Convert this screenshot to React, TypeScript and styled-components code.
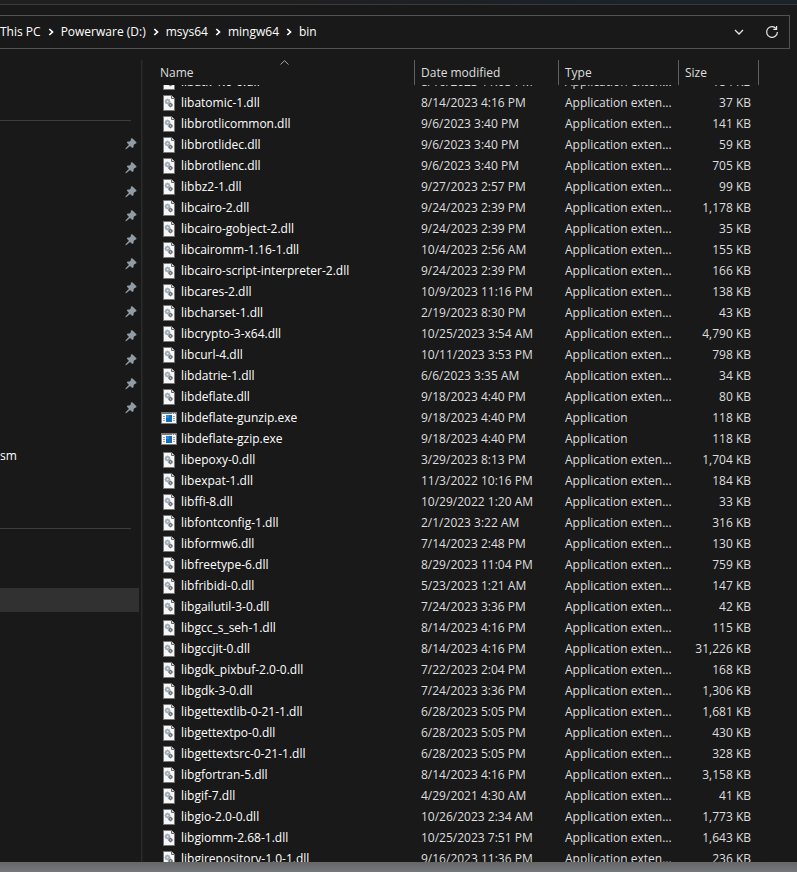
import { Fragment, useLayoutEffect, useRef } from "react";
import styled, { createGlobalStyle } from "styled-components";

const GlobalStyle = createGlobalStyle`
  *, *::before, *::after { box-sizing: border-box; }
  body {
    margin: 0;
    background: #191919;
    color: #fff;
    font-family: "Segoe UI", "Open Sans", "Noto Sans", sans-serif;
    font-size: 12px;
    line-height: 20px;
  }
`;

const Window = styled.div`
  display: flex;
  flex-direction: column;
  height: 100vh;
  overflow: hidden;
  background: #191919;
`;

const TitleEdge = styled.div`
  flex: none;
  height: 5px;
  background: linear-gradient(90deg, #1f1f1f, #1f1f20 30%, #1a222a 80%);
  border-bottom: 1px solid #3b3b3b;
`;

const Toolbar = styled.header`
  flex: none;
  display: flex;
  padding: 10px 7px 11px 0;
`;

const AddressBar = styled.nav`
  flex: 1;
  min-width: 0;
  height: 34px;
  display: flex;
  align-items: center;
  justify-content: space-between;
  border: 1px solid #535353;
  border-left: 0;
  padding-right: 7px;
`;

const Crumbs = styled.ol`
  display: flex;
  align-items: center;
  margin: 0;
  padding: 0;
  list-style: none;
  white-space: nowrap;
`;

const Crumb = styled.a`
  color: #fff;
  text-decoration: none;
`;

const CrumbArrow = styled.li`
  display: flex;
  justify-content: center;
  width: 20px;
`;

const BarActions = styled.div`
  display: flex;
  gap: 13px;
`;

const IconButton = styled.button`
  display: flex;
  align-items: center;
  justify-content: center;
  width: 20px;
  height: 20px;
  padding: 0;
  border: 0;
  background: none;
  color: #e6e6e6;
`;

const Body = styled.div`
  flex: 1;
  min-height: 0;
  display: flex;
`;

const Sidebar = styled.aside`
  flex: none;
  width: 143px;
  padding-right: 3px;
  border-right: 1px solid #212121;
  box-shadow: inset -1px 0 #2b2b2b;
`;

const SideRule = styled.hr`
  height: 1px;
  margin: 0 8px 0 0;
  border: 0;
  background: #3d3d3d;
`;

const SideGroup = styled.ul<{ $top: number; $bottom: number }>`
  margin: 0;
  padding: ${(p) => p.$top}px 0 ${(p) => p.$bottom}px;
  list-style: none;
`;

const SideItem = styled.li<{ $selected?: boolean }>`
  display: flex;
  align-items: center;
  height: 24px;
  padding-right: 2px;
  background: ${(p) => (p.$selected ? "#313131" : "transparent")};
`;

const PinSlot = styled.span`
  display: flex;
  margin-left: auto;
`;

const ListPane = styled.main`
  flex: 1;
  min-width: 0;
  overflow: hidden auto;
  scrollbar-width: none;
`;

const FileTable = styled.table`
  table-layout: fixed;
  width: 616px;
  border-collapse: separate;
  border-spacing: 0;
`;

const Column = styled.col<{ $width: number }>`
  width: ${(p) => p.$width}px;
`;

const HeadCell = styled.th`
  position: sticky;
  top: 0;
  z-index: 1;
  height: 25px;
  padding: 0 0 0 6px;
  background: #191919;
  border-right: 1px solid #5f5f5f;
  color: #dedede;
  font-weight: 400;
  line-height: 24px;
  text-align: left;

  &:first-child { padding-left: 17px; }
`;

const SortMark = styled.span`
  position: absolute;
  top: 0;
  left: 0;
  right: 0;
  display: flex;
  justify-content: center;
  padding-left: 11px;
`;

const Cell = styled.td<{ $right?: boolean }>`
  height: 21px;
  padding: 0 ${(p) => (p.$right ? 8 : 6)}px 0 6px;
  color: #dedede;
  text-align: ${(p) => (p.$right ? "right" : "left")};
  white-space: nowrap;
  overflow: hidden;
`;

const NameCell = styled.td`
  height: 21px;
  padding: 0 0 0 18px;
`;

const FileName = styled.span`
  display: flex;
  align-items: center;
  gap: 4px;
  color: #fff;
  white-space: nowrap;
`;

const DesktopEdge = styled.div`
  flex: none;
  height: 10px;
  background: linear-gradient(#666, #6b6d6f 40%, #73787d);
`;

const ArrowRight = () => (
  <svg width="6" height="8" viewBox="0 0 6 8" fill="none" stroke="#fff" strokeWidth="1.7">
    <path d="M1.3 1 4.5 4 1.3 7" />
  </svg>
);

const ChevronDown = () => (
  <svg width="10" height="6" viewBox="0 0 10 6" fill="none" stroke="currentColor" strokeWidth="1.3">
    <path d="M1 1 5 5 9 1" />
  </svg>
);

const Refresh = () => (
  <svg width="14" height="14" viewBox="0 0 14 14" fill="none" stroke="currentColor" strokeWidth="1.2">
    <path d="M11.2 3.6A5.400 5.400 0 1 0 12.400 7" />
    <path d="M11.600 1V4.300H8.300" />
  </svg>
);

const SortUp = () => (
  <svg width="9" height="5" viewBox="0 0 9 5" fill="none" stroke="#a8a8a8" strokeWidth="1">
    <path d="M.5 4.5 4.5.7 8.5 4.5" />
  </svg>
);

const Pin = () => (
  <svg width="12" height="12" viewBox="0 0 12 12" fill="#929ba3">
    <path d="M5.900.6 7.200.2 11.500 4.300 11.200 5.600 9.500 5.900 8.700 7.300 8.400 9.300 7.300 9.900 5 7.900 1.500 11 .4 11.200.6 10.200 3.900 6.800 1.900 4.700 2.500 3.500 4.600 3.400 5.900 2.300Z" />
  </svg>
);

const DllIcon = () => (
  <svg width="16" height="16" viewBox="0 0 16 16" fill="none">
    <path d="M2.500.5H10.500L13.500 3.500V15.500H2.500Z" fill="#f7f7f7" stroke="#777" />
    <path d="M10.500.5V3.500H13.500" fill="#ddd" stroke="#666" />
    <path d="M6.500 3.500V9.500M3.500 6.500H9.500M4.500 4.500l4 4M8.500 4.500l-4 4" stroke="#b3bcc5" />
    <circle cx="6.500" cy="6.500" r="1.800" fill="#dfe5ea" stroke="#9aa6b1" strokeWidth="1.400" />
    <path d="M9.500 7.500V12.500M7 10H12" stroke="#8b9299" />
    <circle cx="9.500" cy="10" r="1.400" fill="#d5dadf" stroke="#666e76" strokeWidth="1.300" />
  </svg>
);

const ExeIcon = () => (
  <svg width="16" height="16" viewBox="0 0 16 16" shapeRendering="crispEdges">
    <path fill="#7a7a7a" d="M0 2h16v12H0z" />
    <path fill="#f7f7f7" d="M1 4h14v9H1z" />
    <path fill="#ddd" d="M11 3h1v1h-1zM13 3h1v1h-1z" />
    <path fill="#0f6fc0" d="M5 5h6v7H5z" />
    <path fill="#2a8bdc" d="M5 5h3v3H5z" />
    <path fill="#999" d="M2 6h2v1H2zM2 8h2v1H2zM2 10h2v1H2zM12 6h2v1h-2zM12 8h2v1h-2zM12 10h2v1h-2z" />
  </svg>
);

const crumbs = ["This PC", "Powerware (D:)", "msys64", "mingw64", "bin"];

const columns = [
  { label: "Name", width: 272 },
  { label: "Date modified", width: 144 },
  { label: "Type", width: 120 },
  { label: "Size", width: 80 },
];

const files: [string, string, string][] = [
  ["libatk-1.0-0.dll", "8/16/2023 11:03 PM", "184 KB"],
  ["libatomic-1.dll", "8/14/2023 4:16 PM", "37 KB"],
  ["libbrotlicommon.dll", "9/6/2023 3:40 PM", "141 KB"],
  ["libbrotlidec.dll", "9/6/2023 3:40 PM", "59 KB"],
  ["libbrotlienc.dll", "9/6/2023 3:40 PM", "705 KB"],
  ["libbz2-1.dll", "9/27/2023 2:57 PM", "99 KB"],
  ["libcairo-2.dll", "9/24/2023 2:39 PM", "1,178 KB"],
  ["libcairo-gobject-2.dll", "9/24/2023 2:39 PM", "35 KB"],
  ["libcairomm-1.16-1.dll", "10/4/2023 2:56 AM", "155 KB"],
  ["libcairo-script-interpreter-2.dll", "9/24/2023 2:39 PM", "166 KB"],
  ["libcares-2.dll", "10/9/2023 11:16 PM", "138 KB"],
  ["libcharset-1.dll", "2/19/2023 8:30 PM", "43 KB"],
  ["libcrypto-3-x64.dll", "10/25/2023 3:54 AM", "4,790 KB"],
  ["libcurl-4.dll", "10/11/2023 3:53 PM", "798 KB"],
  ["libdatrie-1.dll", "6/6/2023 3:35 AM", "34 KB"],
  ["libdeflate.dll", "9/18/2023 4:40 PM", "80 KB"],
  ["libdeflate-gunzip.exe", "9/18/2023 4:40 PM", "118 KB"],
  ["libdeflate-gzip.exe", "9/18/2023 4:40 PM", "118 KB"],
  ["libepoxy-0.dll", "3/29/2023 8:13 PM", "1,704 KB"],
  ["libexpat-1.dll", "11/3/2022 10:16 PM", "184 KB"],
  ["libffi-8.dll", "10/29/2022 1:20 AM", "33 KB"],
  ["libfontconfig-1.dll", "2/1/2023 3:22 AM", "316 KB"],
  ["libformw6.dll", "7/14/2023 2:48 PM", "130 KB"],
  ["libfreetype-6.dll", "8/29/2023 11:04 PM", "759 KB"],
  ["libfribidi-0.dll", "5/23/2023 1:21 AM", "147 KB"],
  ["libgailutil-3-0.dll", "7/24/2023 3:36 PM", "42 KB"],
  ["libgcc_s_seh-1.dll", "8/14/2023 4:16 PM", "115 KB"],
  ["libgccjit-0.dll", "8/14/2023 4:16 PM", "31,226 KB"],
  ["libgdk_pixbuf-2.0-0.dll", "7/22/2023 2:04 PM", "168 KB"],
  ["libgdk-3-0.dll", "7/24/2023 3:36 PM", "1,306 KB"],
  ["libgettextlib-0-21-1.dll", "6/28/2023 5:05 PM", "1,681 KB"],
  ["libgettextpo-0.dll", "6/28/2023 5:05 PM", "430 KB"],
  ["libgettextsrc-0-21-1.dll", "6/28/2023 5:05 PM", "328 KB"],
  ["libgfortran-5.dll", "8/14/2023 4:16 PM", "3,158 KB"],
  ["libgif-7.dll", "4/29/2021 4:30 AM", "41 KB"],
  ["libgio-2.0-0.dll", "10/26/2023 2:34 AM", "1,773 KB"],
  ["libgiomm-2.68-1.dll", "10/25/2023 7:51 PM", "1,643 KB"],
  ["libgirepository-1.0-1.dll", "9/16/2023 11:36 PM", "236 KB"],
];

const pins = Array.from({ length: 12 }, (_, i) => i);

export default function App() {
  const pane = useRef<HTMLElement>(null);

  useLayoutEffect(() => {
    if (pane.current) pane.current.scrollTop = 14;
  }, []);

  return (
    <Window>
      <GlobalStyle />
      <TitleEdge />
      <Toolbar>
        <AddressBar aria-label="Address">
          <Crumbs>
            {crumbs.map((name, i) => (
              <Fragment key={name}>
                {i > 0 && (
                  <CrumbArrow aria-hidden="true">
                    <ArrowRight />
                  </CrumbArrow>
                )}
                <li>
                  <Crumb href="#">{name}</Crumb>
                </li>
              </Fragment>
            ))}
          </Crumbs>
          <BarActions>
            <IconButton aria-label="Previous locations">
              <ChevronDown />
            </IconButton>
            <IconButton aria-label="Refresh">
              <Refresh />
            </IconButton>
          </BarActions>
        </AddressBar>
      </Toolbar>
      <Body>
        <Sidebar>
          <SideGroup $top={60} $bottom={0} />
          <SideRule />
          <SideGroup $top={11} $bottom={60}>
            {pins.map((i) => (
              <SideItem key={i}>
                <PinSlot>
                  <Pin />
                </PinSlot>
              </SideItem>
            ))}
            <SideItem />
            <SideItem>sm</SideItem>
          </SideGroup>
          <SideRule />
          <SideGroup $top={59} $bottom={0}>
            <SideItem $selected />
          </SideGroup>
        </Sidebar>
        <ListPane ref={pane}>
          <FileTable>
            <colgroup>
              {columns.map((c) => (
                <Column key={c.label} $width={c.width} />
              ))}
            </colgroup>
            <thead>
              <tr>
                {columns.map((c) => (
                  <HeadCell key={c.label} scope="col">
                    {c.label}
                    {c.label === "Name" && (
                      <SortMark>
                        <SortUp />
                      </SortMark>
                    )}
                  </HeadCell>
                ))}
              </tr>
            </thead>
            <tbody>
              {files.map(([name, date, size]) => {
                const isExe = name.endsWith(".exe");
                return (
                  <tr key={name}>
                    <NameCell>
                      <FileName>
                        {isExe ? <ExeIcon /> : <DllIcon />}
                        {name}
                      </FileName>
                    </NameCell>
                    <Cell>{date}</Cell>
                    <Cell>{isExe ? "Application" : "Application exten..."}</Cell>
                    <Cell $right>{size}</Cell>
                  </tr>
                );
              })}
            </tbody>
          </FileTable>
        </ListPane>
      </Body>
      <DesktopEdge />
    </Window>
  );
}
